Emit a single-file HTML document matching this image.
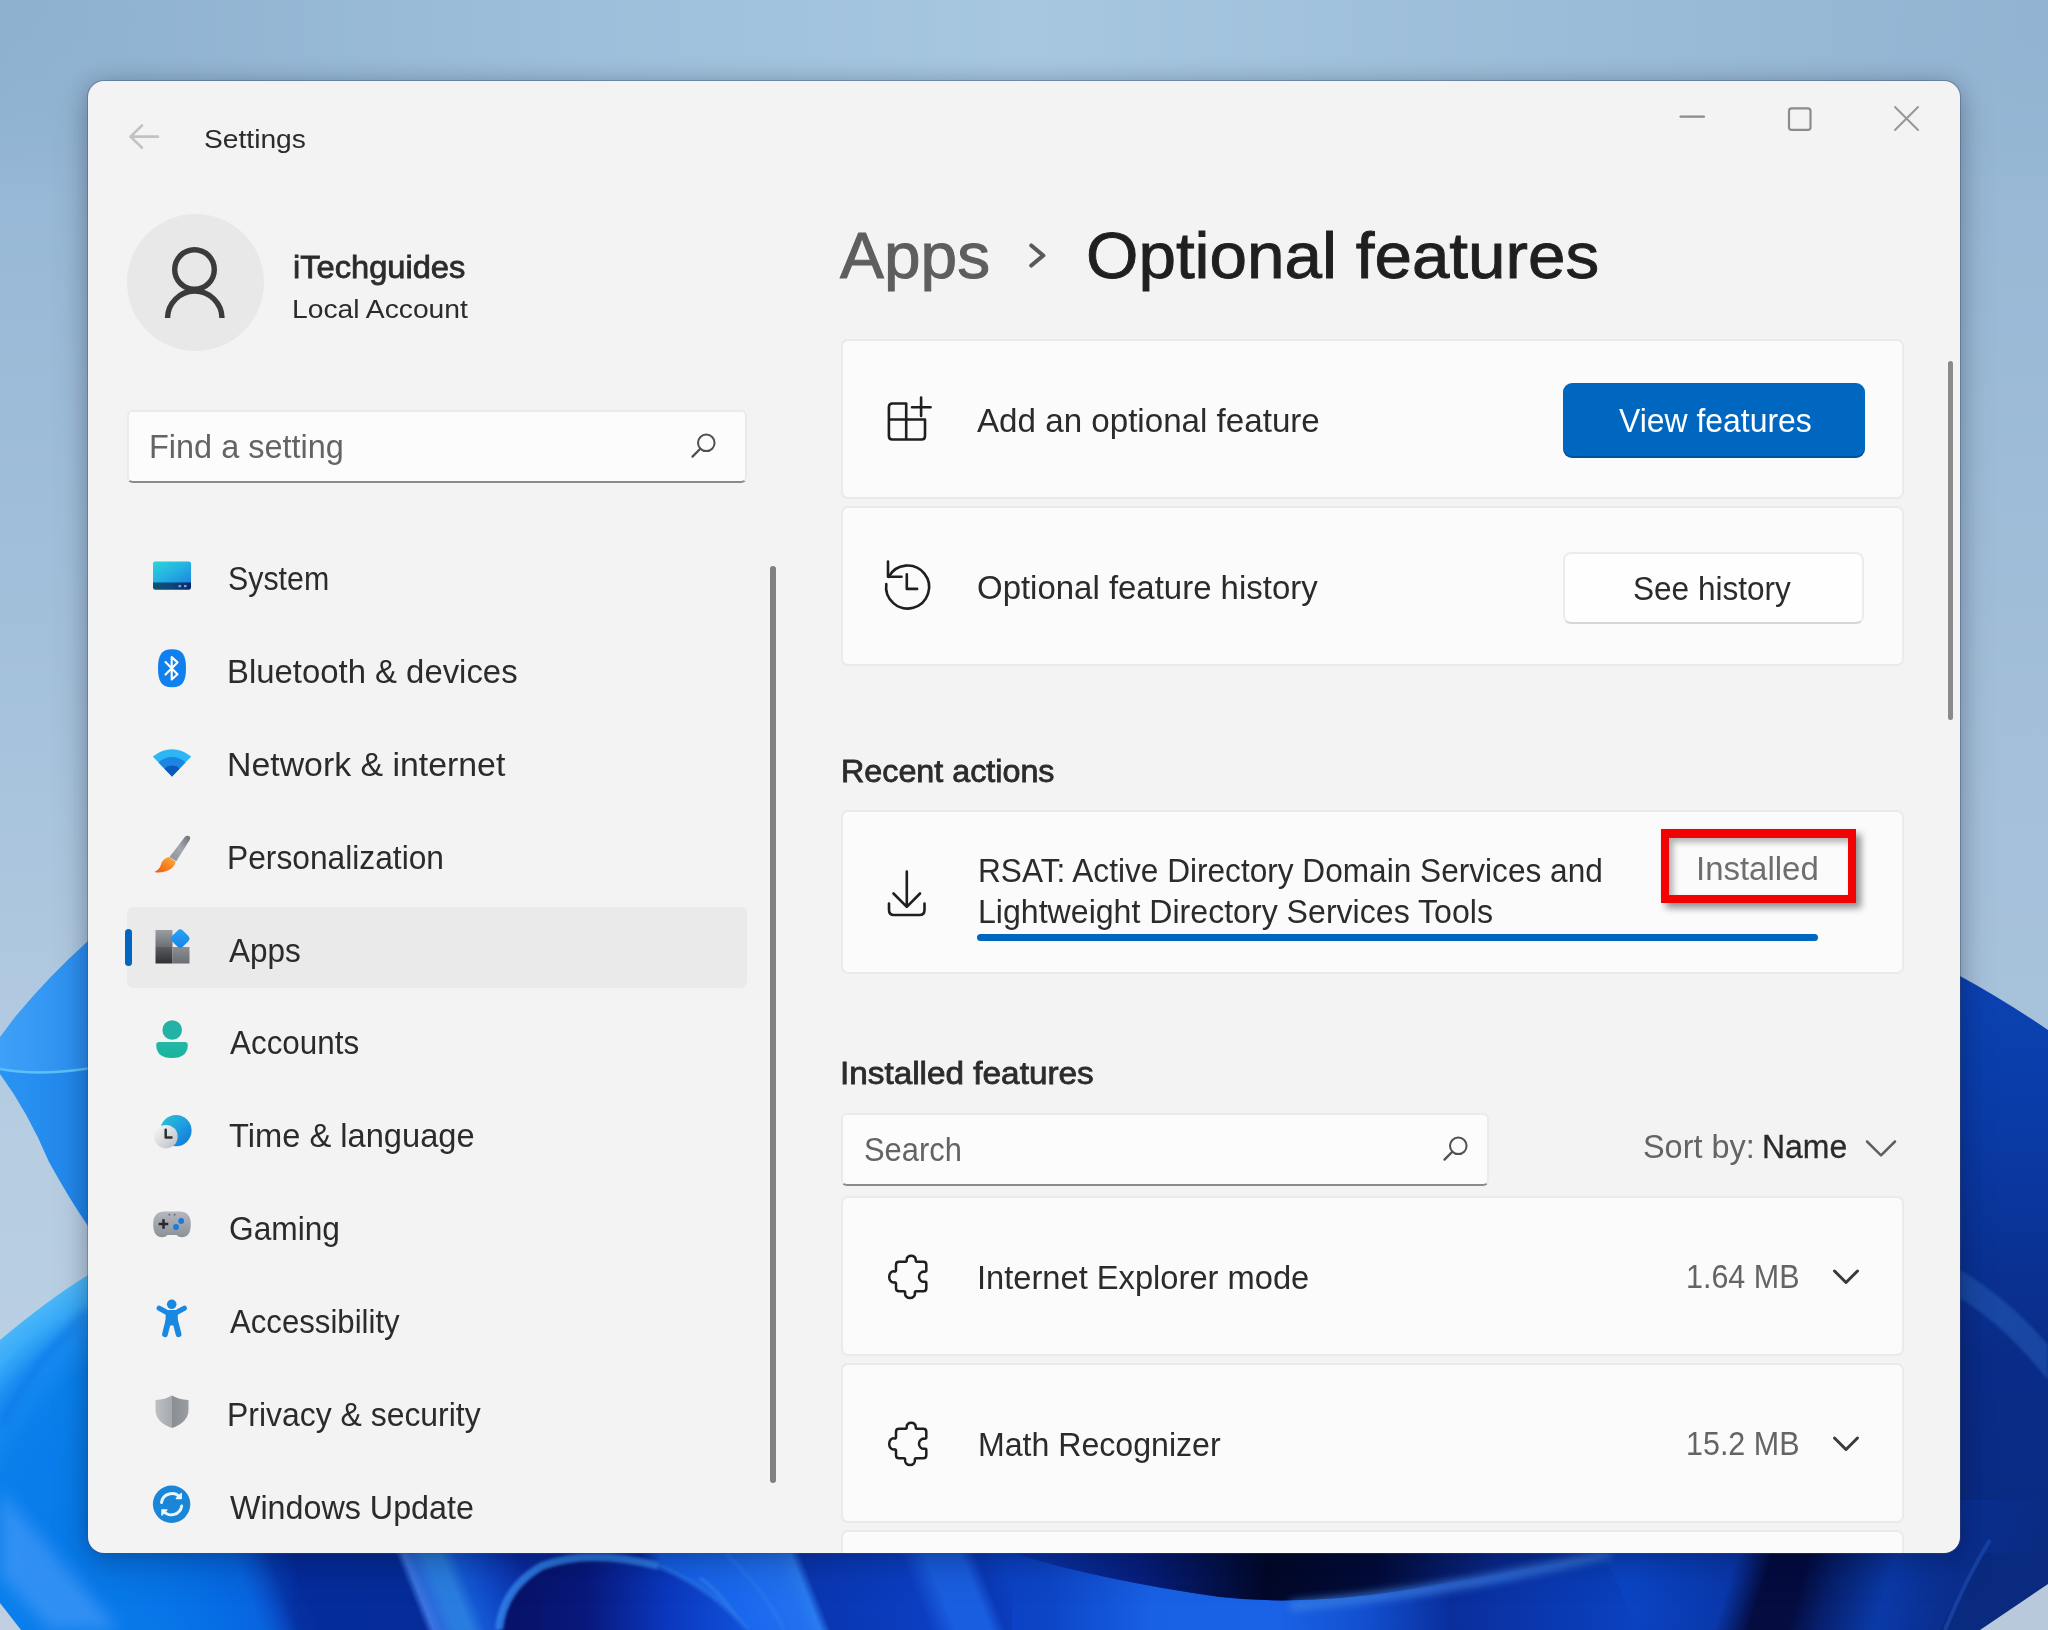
<!DOCTYPE html>
<html lang="en">
<head>
<meta charset="utf-8">
<title>Settings - Optional features</title>
<style>
html,body{margin:0;padding:0;}
body{width:2048px;height:1630px;overflow:hidden;position:relative;background:#a3c0da;font-family:"Liberation Sans",sans-serif;}
#bg{position:absolute;left:0;top:0;width:2048px;height:1630px;display:block;}
#win{position:absolute;left:88px;top:81px;width:1872px;height:1472px;border-radius:16px;background:#f3f3f3;box-shadow:0 0 0 1px rgba(60,80,110,.38),0 2px 21px rgba(0,10,30,.24),0 14px 40px rgba(0,10,30,.16);}
.abs{position:absolute;}
.t{position:absolute;white-space:nowrap;line-height:1;transform-origin:0 50%;display:block;}
.card{position:absolute;left:841px;width:1063px;box-sizing:border-box;background:#fbfbfb;border:2px solid #eaeaea;border-radius:7px;}
.inp{position:absolute;box-sizing:border-box;background:#fcfcfc;border:2px solid #ebebeb;border-bottom:2px solid #8a8a8a;border-radius:6px;}
svg{overflow:visible}
.ic{position:absolute;display:block;}
</style>
</head>
<body>
<svg id="bg" viewBox="0 0 2048 1630" width="2048" height="1630">
<defs>
<linearGradient id="gTop" x1="0" y1="0" x2="1" y2="0">
<stop offset="0" stop-color="#8db0cf"/><stop offset=".28" stop-color="#9dbfdb"/><stop offset=".5" stop-color="#a7c7e0"/><stop offset=".75" stop-color="#9cbdd9"/><stop offset="1" stop-color="#92b4d2"/>
</linearGradient>
<linearGradient id="gLeft" x1="0" y1="0" x2="0" y2="1">
<stop offset="0" stop-color="#8eb2d2" stop-opacity="0"/><stop offset=".12" stop-color="#97b8d6" stop-opacity="1"/><stop offset=".45" stop-color="#a6c2dc"/><stop offset=".7" stop-color="#b6cde2"/><stop offset="1" stop-color="#bfd2e4"/>
</linearGradient>
<linearGradient id="gRight" x1="0" y1="0" x2="0" y2="1">
<stop offset="0" stop-color="#92b4d2" stop-opacity="0"/><stop offset=".12" stop-color="#98b8d5" stop-opacity="1"/><stop offset=".5" stop-color="#a5c0da"/><stop offset="1" stop-color="#adc6dc"/>
</linearGradient>
<linearGradient id="gBotL" gradientUnits="userSpaceOnUse" x1="0" y1="0" x2="2048" y2="0" gradientTransform="translate(-621.2,0) skewX(21.8)"><stop offset="0.0000" stop-color="#2a8cf5"/><stop offset="0.0430" stop-color="#0a7ae8"/><stop offset="0.0732" stop-color="#0870e6"/><stop offset="0.0977" stop-color="#0666e2"/><stop offset="0.1133" stop-color="#0860dc"/><stop offset="0.1221" stop-color="#0a4ac6"/><stop offset="0.1309" stop-color="#0632a4"/><stop offset="0.1416" stop-color="#052c9c"/><stop offset="0.1929" stop-color="#062c9a"/><stop offset="0.1968" stop-color="#3a74e2"/><stop offset="0.2012" stop-color="#2a6cdc"/><stop offset="0.2075" stop-color="#2a7de0"/><stop offset="0.2148" stop-color="#2a7de0"/><stop offset="0.2222" stop-color="#1458d4"/><stop offset="0.2344" stop-color="#0e46c4"/><stop offset="0.2539" stop-color="#0a2aa0"/><stop offset="0.3125" stop-color="#0a2aa6"/><stop offset="0.3223" stop-color="#1560e8"/><stop offset="0.3516" stop-color="#1a68ee"/><stop offset="0.3784" stop-color="#2272f0"/><stop offset="0.3857" stop-color="#2a7af0"/><stop offset="0.3906" stop-color="#0a37b2"/><stop offset="0.4395" stop-color="#0c3ec2"/><stop offset="0.4517" stop-color="#1a5ee0"/><stop offset="0.4688" stop-color="#1a5ee0"/><stop offset="0.4761" stop-color="#0a3ab8"/><stop offset="0.4883" stop-color="#0c42c4"/><stop offset="0.5371" stop-color="#0d48cc"/><stop offset="1.0000" stop-color="#0d48cc"/></linearGradient>
<linearGradient id="gBotR" gradientUnits="userSpaceOnUse" x1="0" y1="0" x2="2048" y2="0" gradientTransform="translate(481.4,0) skewX(-17.3)"><stop offset="0.0000" stop-color="#0d48cc"/><stop offset="0.5371" stop-color="#0d48cc"/><stop offset="0.6104" stop-color="#0a34b0"/><stop offset="0.6836" stop-color="#0a2a94"/><stop offset="0.7227" stop-color="#0a3cb8"/><stop offset="0.8008" stop-color="#0b45c5"/><stop offset="0.8496" stop-color="#0a38ac"/><stop offset="0.8667" stop-color="#040c40"/><stop offset="0.8848" stop-color="#040c40"/><stop offset="0.9009" stop-color="#07206e"/><stop offset="0.9277" stop-color="#0a3aa8"/><stop offset="0.9570" stop-color="#0a2f90"/><stop offset="1.0000" stop-color="#0a2a80"/></linearGradient>
<linearGradient id="gFade" gradientUnits="userSpaceOnUse" x1="100" y1="0" x2="300" y2="0"><stop offset="0" stop-color="#fff"/><stop offset="1" stop-color="#000"/></linearGradient>
<mask id="mFade" maskUnits="userSpaceOnUse" x="0" y="1100" width="320" height="530"><rect x="0" y="1100" width="320" height="530" fill="url(#gFade)"/></mask>
<linearGradient id="gPA" x1="0" y1="0" x2="1" y2="0"><stop offset="0" stop-color="#3ea0f6"/><stop offset="1" stop-color="#1f84ec"/></linearGradient>
<linearGradient id="gPA2" x1="0" y1="0" x2="1" y2="0"><stop offset="0" stop-color="#2a94f2"/><stop offset="1" stop-color="#1a7ce6"/></linearGradient>
<radialGradient id="gPB" gradientUnits="userSpaceOnUse" cx="210" cy="1560" r="330"><stop offset="0" stop-color="#0672e6"/><stop offset=".68" stop-color="#0a80ec"/><stop offset=".8" stop-color="#1a8ef2"/><stop offset=".87" stop-color="#3aacf8"/><stop offset=".93" stop-color="#4cb8f8"/><stop offset="1" stop-color="#4cb8f8"/></radialGradient>
<linearGradient id="gR" x1="0" y1="0" x2="0" y2="1"><stop offset="0" stop-color="#0c44b6"/><stop offset=".25" stop-color="#0a3ca8"/><stop offset=".6" stop-color="#0a2c88"/><stop offset="1" stop-color="#0a2a80"/></linearGradient>
<linearGradient id="gPet" gradientUnits="userSpaceOnUse" x1="520" y1="0" x2="740" y2="0"><stop offset="0" stop-color="#07126a"/><stop offset=".3" stop-color="#08187c"/><stop offset=".65" stop-color="#0a36bc"/><stop offset="1" stop-color="#1050d8"/></linearGradient>
<linearGradient id="gDark" gradientUnits="userSpaceOnUse" x1="1012" y1="0" x2="1620" y2="0"><stop offset="0" stop-color="#0a3ab8"/><stop offset=".22" stop-color="#071e7c"/><stop offset=".42" stop-color="#020828"/><stop offset=".6" stop-color="#030c3a"/><stop offset=".8" stop-color="#0a2a90"/><stop offset="1" stop-color="#0a3cb8"/></linearGradient>
<linearGradient id="gBr" gradientUnits="userSpaceOnUse" x1="1012" y1="0" x2="1640" y2="0"><stop offset="0" stop-color="#0c42c5"/><stop offset=".06" stop-color="#0d46c8"/><stop offset=".22" stop-color="#1860e4"/><stop offset=".42" stop-color="#1a62e6"/><stop offset=".56" stop-color="#1250d0"/><stop offset=".7" stop-color="#0a2e9c"/><stop offset=".85" stop-color="#0a38b0"/><stop offset="1" stop-color="#0b42c0"/></linearGradient>
<filter id="b2" x="-20%" y="-20%" width="140%" height="140%"><feGaussianBlur stdDeviation="1.500"/></filter>
<filter id="b4" x="-20%" y="-20%" width="140%" height="140%"><feGaussianBlur stdDeviation="4"/></filter>
<filter id="b8" x="-20%" y="-20%" width="140%" height="140%"><feGaussianBlur stdDeviation="8"/></filter>
</defs>
<rect width="2048" height="1630" fill="url(#gTop)"/>
<rect x="0" y="0" width="140" height="1630" fill="url(#gLeft)"/>
<rect x="1900" y="0" width="148" height="1630" fill="url(#gRight)"/>
<!-- bottom strip -->
<rect x="0" y="1500" width="1130" height="130" fill="url(#gBotL)"/>
<rect x="1100" y="1500" width="948" height="130" fill="url(#gBotR)"/>
<!-- left petal A -->
<path d="M140 900 L88 941 Q49 976 15 1017 L0 1037 L0 1069 Q37 1075 88 1068 L140 1060 Z" fill="url(#gPA)"/>
<path d="M0 1069 Q37 1075 88 1068 L140 1060 L140 1290 L88 1226 Q70 1200 49 1162 Q28 1112 0 1074 Z" fill="url(#gPA2)"/>
<path d="M0 1069 Q37 1076 88 1068.500" fill="none" stroke="#5cc0fa" stroke-width="2.500"/>
<!-- left petal B -->
<path d="M300 1200 L88 1275 Q49 1299 0 1340 L0 1630 L300 1630 Z" fill="url(#gPB)" mask="url(#mFade)"/>
<path d="M88 1312 Q37 1356 0 1426" fill="none" stroke="#0a60e0" stroke-width="5" opacity=".5" filter="url(#b4)"/>
<path d="M0 1490 L0 1575 L50 1630 L120 1630 Z" fill="#3a94f6" opacity=".8" filter="url(#b8)"/>
<path d="M0 1603 L0 1630 L21 1630 Z" fill="#c0cfdf"/>
<!-- right petal -->
<path d="M1900 940 L1960 976 Q2004 1000 2048 1030 L2048 1630 L1900 1630 Z" fill="url(#gR)"/>
<path d="M1960 1270 Q2010 1300 2048 1345 L2048 1380 Q2005 1326 1960 1298 Z" fill="#2258b4" opacity=".6" filter="url(#b2)"/>
<rect x="1840" y="1500" width="208" height="130" fill="url(#gBotR)"/>
<path d="M1940 1630 L1975 1560 L1985 1553 L2048 1553 L2048 1590 L1985 1630 Z" fill="#0a2a80"/>
<path d="M1945 1630 Q1965 1580 1990 1540" stroke="#1a4ab0" stroke-width="4" fill="none" opacity=".7"/>
<path d="M1980 1630 L2048 1584 L2048 1630 Z" fill="#b9c9dc"/>
<!-- bottom details -->
<path d="M1012 1553 Q1100 1580 1220 1597 Q1300 1606 1400 1591 Q1500 1574 1604 1555 L1640 1630 L1012 1630 Z" fill="url(#gBr)"/>
<path d="M1012 1546 L1700 1546 L1604 1555 Q1500 1574 1400 1591 Q1300 1606 1220 1597 Q1100 1580 1012 1553 Z" fill="url(#gDark)"/>
<path d="M1290 1606 Q1450 1592 1610 1553" fill="none" stroke="#3d80e4" stroke-width="9" opacity=".85" filter="url(#b4)"/>
<path d="M700 1578 Q725 1595 743 1630" fill="none" stroke="#3a84f0" stroke-width="3" opacity=".7" filter="url(#b2)"/>
<path d="M725 1553 Q765 1590 784 1630" fill="none" stroke="#2f7af0" stroke-width="3" opacity=".7" filter="url(#b2)"/>
<path d="M499 1630 Q503 1588 542 1566 Q590 1548 659 1566 Q715 1590 748 1630 Z" fill="url(#gPet)"/>
<path d="M499 1630 Q503 1588 542 1566 Q590 1548 659 1566" fill="none" stroke="#2f7fe8" stroke-width="8" opacity=".9" filter="url(#b2)"/>
<path d="M659 1566 Q715 1590 748 1630" fill="none" stroke="#2a72e6" stroke-width="5" opacity=".7" filter="url(#b2)"/>
</svg>
<div id="win"></div>
<!-- title bar -->
<svg class="ic" style="left:128px;top:122px" width="32" height="30" viewBox="0 0 32 30"><path d="M14 3.500 L2.500 14.600 L14 25.700 M3 14.600 H30" fill="none" stroke="#c2c2c2" stroke-width="2.600" stroke-linecap="round" stroke-linejoin="round"/></svg>
<svg class="ic" style="left:1670px;top:100px" width="260" height="40" viewBox="0 0 260 40">
<path d="M10.500 16.700 H34" stroke="#8c8c8c" stroke-width="2.200" fill="none" stroke-linecap="round"/>
<rect x="119" y="8.300" width="21.500" height="21.500" rx="2.600" fill="none" stroke="#8c8c8c" stroke-width="2.200"/>
<path d="M225 7 L248 30 M248 7 L225 30" stroke="#979797" stroke-width="2" fill="none" stroke-linecap="round"/>
</svg>
<!-- avatar -->
<div class="abs" style="left:127px;top:214px;width:137px;height:137px;border-radius:50%;background:#e8e8e8"></div>
<svg class="ic" style="left:155px;top:241.200px" width="80" height="84" viewBox="0 0 80 84"><circle cx="39.500" cy="28.500" r="19.800" fill="none" stroke="#3b3b3b" stroke-width="5.400"/><path d="M12.500 77 A27.500 27.500 0 0 1 39.500 50 A27.500 27.500 0 0 1 67 77" fill="none" stroke="#3b3b3b" stroke-width="5.400"/></svg>
<!-- search box -->
<div class="inp" style="left:127px;top:410px;width:620px;height:73px"></div>
<svg class="ic" style="left:690px;top:432px" width="28" height="28" viewBox="0 0 28 28"><circle cx="16.300" cy="10.800" r="8.300" fill="none" stroke="#505050" stroke-width="2"/><path d="M10.300 16.800 L2.500 24.600" stroke="#505050" stroke-width="2.300" stroke-linecap="round"/></svg>
<!-- nav selection -->
<div class="abs" style="left:127px;top:907px;width:620px;height:80.500px;border-radius:6px;background:#eaeaea"></div>
<div class="abs" style="left:125.200px;top:928.700px;width:7.200px;height:37px;border-radius:3.500px;background:#0067c0"></div>
<!-- sidebar scrollbar -->
<div class="abs" style="left:770.400px;top:566px;width:5.600px;height:917px;border-radius:3px;background:#808080"></div>
<!-- right scrollbar -->
<div class="abs" style="left:1948px;top:361px;width:5px;height:359px;border-radius:3px;background:#8a8a8a"></div>
<!-- cards -->
<div class="card" style="top:339px;height:160px"></div>
<div class="card" style="top:506px;height:160px"></div>
<div class="card" style="top:810px;height:164px"></div>
<div class="card" style="top:1196px;height:160px"></div>
<div class="card" style="top:1363px;height:160px"></div>
<div class="card" style="top:1530px;height:42px;border-bottom-left-radius:0;border-bottom-right-radius:0;clip-path:inset(0 0 19px 0)"></div>
<!-- buttons -->
<div class="abs" style="left:1563px;top:383px;width:302px;height:75px;border-radius:9px;background:#0067c0;box-shadow:inset 0 -2px 0 rgba(0,0,0,.18)"></div>
<div class="abs" style="left:1563px;top:551.500px;width:301px;height:72.500px;border-radius:8px;background:#fefefe;box-sizing:border-box;border:2px solid #ececec;border-bottom-color:#d6d6d6"></div>
<!-- progress -->
<div class="abs" style="left:977px;top:933.500px;width:841px;height:7px;border-radius:3.500px;background:#0067c0"></div>
<!-- red highlight box -->
<div class="abs" style="left:1660.500px;top:829px;width:195px;height:74px;box-sizing:border-box;border:8.700px solid #f20303;border-top-width:9.800px;box-shadow:5px 5px 7px rgba(0,0,0,.42),inset 4px 4px 6px rgba(0,0,0,.3)"></div>
<!-- installed search -->
<div class="inp" style="left:841px;top:1113px;width:648px;height:73px"></div>
<svg class="ic" style="left:1442px;top:1135px" width="28" height="28" viewBox="0 0 28 28"><circle cx="16.300" cy="10.800" r="8.300" fill="none" stroke="#505050" stroke-width="2"/><path d="M10.300 16.800 L2.500 24.600" stroke="#505050" stroke-width="2.300" stroke-linecap="round"/></svg>
<!-- chevrons -->
<svg class="ic" style="left:1026px;top:240px" width="24" height="32" viewBox="0 0 24 32"><path d="M5.300 5.500 L17.300 15.500 L5.300 25.500" fill="none" stroke="#5a5a5a" stroke-width="4.100" stroke-linecap="round" stroke-linejoin="round"/></svg>
<svg class="ic" style="left:1864px;top:1136px" width="34" height="24" viewBox="0 0 34 24"><path d="M3 5.500 L17 19.300 L31 5.500" fill="none" stroke="#5f5f5f" stroke-width="2.500" stroke-linecap="round" stroke-linejoin="round"/></svg>
<svg class="ic" style="left:1831px;top:1267px" width="30" height="20" viewBox="0 0 30 20"><path d="M3.500 4 L15 15.500 L26.500 4" fill="none" stroke="#3a3a3a" stroke-width="3" stroke-linecap="round" stroke-linejoin="round"/></svg>
<svg class="ic" style="left:1831px;top:1434px" width="30" height="20" viewBox="0 0 30 20"><path d="M3.500 4 L15 15.500 L26.500 4" fill="none" stroke="#3a3a3a" stroke-width="3" stroke-linecap="round" stroke-linejoin="round"/></svg>
<!-- card icons -->
<svg class="ic" style="left:885px;top:395px" width="50" height="50" viewBox="0 0 50 50" fill="none" stroke="#1f1f1f" stroke-width="2.600" stroke-linecap="round" stroke-linejoin="round">
<path d="M21.200 8.500 H7.500 Q3.900 8.500 3.900 12.100 V40.900 Q3.900 44.500 7.500 44.500 H36.400 Q40 44.500 40 40.900 V24.500 H3.900 M21.200 8.500 V44.500"/>
<path d="M27 12.300 H45.600 M36.100 2.600 V21"/>
</svg>
<svg class="ic" style="left:884px;top:561.500px" width="50" height="50" viewBox="0 0 50 50" fill="none" stroke="#1f1f1f" stroke-width="2.600" stroke-linecap="round" stroke-linejoin="round">
<path d="M2.310 22 A21.500 21.500 0 1 0 4.620 14.900"/>
<path d="M4 -0.500 V14.700 H17.500"/>
<path d="M22.800 12.200 V26.900 H33.100"/>
</svg>
<svg class="ic" style="left:885px;top:868px" width="50" height="52" viewBox="0 0 50 52" fill="none" stroke="#1f1f1f" stroke-width="2.600" stroke-linecap="round" stroke-linejoin="round">
<path d="M21.800 3.500 V38.500 M8.500 25.500 L21.800 38.800 L35 25.500"/>
<path d="M4 35.500 V42 Q4 47 9 47 H34.500 Q39.500 47 39.500 42 V35.500"/>
</svg>
<svg class="ic" style="left:885px;top:1252px" width="50" height="50" viewBox="0 0 50 50" fill="none" stroke="#1f1f1f" stroke-width="2.500" stroke-linejoin="round">
<path id="pz" d="M14 9.800 H20.500 C21.500 9.800 21.800 9 21.700 8 C21.500 5.500 23.500 3.800 26.200 3.800 C28.900 3.800 30.900 5.500 30.700 8 C30.600 9 30.900 9.800 31.900 9.800 H38.300 Q41.300 9.800 41.300 12.800 V18.500 C41.300 19.500 40.500 19.900 39.500 19.700 C36.500 19.200 34 21.500 34 24.700 C34 27.900 36.500 30.200 39.500 29.700 C40.500 29.500 41.300 29.900 41.300 30.900 V36.200 Q41.300 39.200 38.300 39.200 H31 C30 39.200 29.700 40 29.900 41 C30.300 43.800 28 46.100 25 46.100 C22 46.100 19.700 43.800 20.100 41 C20.300 40 20 39.200 19 39.200 H14 Q11 39.200 11 36.200 V31.500 C11 30.500 10.200 30.200 9.200 30.400 C6.500 30.900 4.200 28.300 4.200 24.900 C4.200 21.500 6.500 18.900 9.200 19.400 C10.200 19.600 11 19.300 11 18.300 V12.800 Q11 9.800 14 9.800 Z"/>
</svg>
<svg class="ic" style="left:885px;top:1419px" width="50" height="50" viewBox="0 0 50 50" fill="none" stroke="#1f1f1f" stroke-width="2.500" stroke-linejoin="round">
<path d="M14 9.800 H20.500 C21.500 9.800 21.800 9 21.700 8 C21.500 5.500 23.500 3.800 26.200 3.800 C28.900 3.800 30.900 5.500 30.700 8 C30.600 9 30.900 9.800 31.900 9.800 H38.300 Q41.300 9.800 41.300 12.800 V18.500 C41.300 19.500 40.500 19.900 39.500 19.700 C36.500 19.200 34 21.500 34 24.700 C34 27.900 36.500 30.200 39.500 29.700 C40.500 29.500 41.300 29.900 41.300 30.900 V36.200 Q41.300 39.200 38.300 39.200 H31 C30 39.200 29.700 40 29.900 41 C30.300 43.800 28 46.100 25 46.100 C22 46.100 19.700 43.800 20.100 41 C20.300 40 20 39.200 19 39.200 H14 Q11 39.200 11 36.200 V31.500 C11 30.500 10.200 30.200 9.200 30.400 C6.500 30.900 4.200 28.300 4.200 24.900 C4.200 21.500 6.500 18.900 9.200 19.400 C10.200 19.600 11 19.300 11 18.300 V12.800 Q11 9.800 14 9.800 Z"/>
</svg>
<!-- nav icons -->
<svg class="ic" style="left:150px;top:556px" width="44" height="40" viewBox="0 0 44 40">
<defs><linearGradient id="nSys" x1="0" y1="0" x2="1" y2="1"><stop offset="0" stop-color="#2bd6d8"/><stop offset=".5" stop-color="#25b2e2"/><stop offset="1" stop-color="#1a86e0"/></linearGradient>
<linearGradient id="nSys2" x1="0" y1="0" x2="1" y2="0"><stop offset="0" stop-color="#0a5274"/><stop offset=".5" stop-color="#0d4878"/><stop offset="1" stop-color="#0a246a"/></linearGradient></defs>
<path d="M3 7.500 Q3 5.600 5 5.600 H39 Q41 5.600 41 7.500 V27 H3 Z" fill="url(#nSys)"/>
<path d="M3 26.500 H41 V31.500 Q41 33.700 38.500 33.700 H5.500 Q3 33.700 3 31.500 Z" fill="url(#nSys2)"/>
<rect x="28.500" y="29" width="2.600" height="2.200" fill="#6fa4d6"/><rect x="34" y="29" width="2.600" height="2.200" fill="#7b9fdc"/>
</svg>
<svg class="ic" style="left:150px;top:646px" width="44" height="46" viewBox="0 0 44 46">
<path d="M22 3.300 C32.500 3.300 36 9 36 22.300 C36 35.600 32.500 41.300 22 41.300 C11.500 41.300 8 35.600 8 22.300 C8 9 11.500 3.300 22 3.300 Z" fill="#0f80ee"/>
<path d="M15.500 16 L27.500 28.200 L21.700 33.500 V11.100 L27.500 16.400 L15.500 28.600" fill="none" stroke="#fff" stroke-width="2.100" stroke-linejoin="round" stroke-linecap="round"/>
</svg>
<svg class="ic" style="left:150px;top:744px" width="44" height="38" viewBox="0 0 44 38">
<defs><clipPath id="wfc"><path d="M22 32.500 L2.800 12.600 Q12 5.300 22 5.300 Q32 5.300 41.200 12.600 Z"/></clipPath></defs>
<g clip-path="url(#wfc)"><rect x="0" y="0" width="44" height="38" fill="#2cb6f5"/><circle cx="22" cy="32.300" r="19.300" fill="#1a86e2"/><circle cx="22" cy="32.300" r="10.800" fill="#0b57bc"/></g>
</svg>
<svg class="ic" style="left:150px;top:832px" width="44" height="46" viewBox="0 0 44 46">
<defs><linearGradient id="nBr" x1="1" y1="0" x2="0" y2="1"><stop offset="0" stop-color="#6c7077"/><stop offset=".5" stop-color="#a4a8ae"/><stop offset="1" stop-color="#8d9198"/></linearGradient>
<linearGradient id="nBr2" x1="1" y1="0" x2="0" y2="1"><stop offset="0" stop-color="#fbb040"/><stop offset=".6" stop-color="#f77a1c"/><stop offset="1" stop-color="#f05a18"/></linearGradient></defs>
<path d="M38.800 4 Q41 5.200 39.800 7.700 L26.300 29.300 L19.500 25 L35 4.800 Q36.800 3 38.800 4 Z" fill="url(#nBr)"/>
<path d="M19 25 L25.800 29.800 Q24.500 35.500 18 38.500 Q11 41.500 4.500 40 Q9.500 37.500 11 32.500 Q12.500 26.500 19 25 Z" fill="url(#nBr2)"/>
</svg>
<svg class="ic" style="left:150px;top:924px" width="44" height="44" viewBox="0 0 44 44">
<defs><linearGradient id="nAp1" x1="0" y1="0" x2="0" y2="1"><stop offset="0" stop-color="#9a9da2"/><stop offset="1" stop-color="#6c6f74"/></linearGradient>
<linearGradient id="nAp2" x1="0" y1="0" x2="0" y2="1"><stop offset="0" stop-color="#5a5d61"/><stop offset="1" stop-color="#2f3134"/></linearGradient>
<linearGradient id="nAp3" x1="0" y1="0" x2="0" y2="1"><stop offset="0" stop-color="#8c8f94"/><stop offset="1" stop-color="#6a6d72"/></linearGradient></defs>
<rect x="5.500" y="6" width="17" height="17" fill="url(#nAp1)"/>
<rect x="5.500" y="23" width="17" height="16.500" fill="url(#nAp2)"/>
<rect x="22.500" y="23" width="17" height="16.500" fill="url(#nAp3)"/>
<defs><linearGradient id="nAp4" x1="0" y1="0" x2="1" y2="1"><stop offset="0" stop-color="#28a6f4"/><stop offset="1" stop-color="#1780e6"/></linearGradient></defs><rect x="22.600" y="7.100" width="15.200" height="15.200" rx="4" transform="rotate(45 30.200 14.700)" fill="url(#nAp4)"/>
</svg>
<svg class="ic" style="left:150px;top:1016px" width="44" height="46" viewBox="0 0 44 46">
<defs><linearGradient id="nAc" x1="0" y1="0" x2="0" y2="1"><stop offset="0" stop-color="#25b7a6"/><stop offset="1" stop-color="#17b49a"/></linearGradient></defs>
<circle cx="22.200" cy="14" r="9.800" fill="#23b2a3"/>
<path d="M8.500 26 H35.500 Q37.800 26 37.800 28.500 Q37.800 42 22 42 Q6.200 42 6.200 28.500 Q6.200 26 8.500 26 Z" fill="url(#nAc)"/>
</svg>
<svg class="ic" style="left:150px;top:1110px" width="44" height="46" viewBox="0 0 44 46">
<defs><linearGradient id="nGl" x1="0" y1="0" x2="1" y2="1"><stop offset="0" stop-color="#2cc5d0"/><stop offset=".5" stop-color="#1ea0e0"/><stop offset="1" stop-color="#1272d8"/></linearGradient>
<linearGradient id="nCk" x1="0" y1="0" x2="1" y2="1"><stop offset="0" stop-color="#fafafa"/><stop offset="1" stop-color="#b8bcc2"/></linearGradient></defs>
<circle cx="26" cy="20.600" r="15.600" fill="url(#nGl)"/>
<circle cx="15.900" cy="26.700" r="11.800" fill="url(#nCk)"/>
<path d="M15.700 19.800 V27.600 H21.500" fill="none" stroke="#2e3034" stroke-width="2.500" stroke-linecap="round" stroke-linejoin="round"/>
</svg>
<svg class="ic" style="left:150px;top:1204px" width="44" height="40" viewBox="0 0 44 40">
<defs><linearGradient id="nGm" x1="0" y1="0" x2="0" y2="1"><stop offset="0" stop-color="#b4b8be"/><stop offset="1" stop-color="#8c9198"/></linearGradient></defs>
<path d="M14.500 7.500 H29.500 Q40.800 7.500 40.800 20 Q40.800 33.200 32 33.200 Q28.500 33.200 26.500 31 H17.500 Q15.500 33.200 12 33.200 Q3.200 33.200 3.200 20 Q3.200 7.500 14.500 7.500 Z" fill="url(#nGm)"/>
<path d="M8.700 20 H18.300 M13.500 15.200 V24.800" stroke="#26282b" stroke-width="2.500" fill="none"/>
<circle cx="31.200" cy="17" r="2.900" fill="#1a7ae0"/><circle cx="26" cy="23" r="2.900" fill="#1a7ae0"/>
<circle cx="19.400" cy="10.700" r="1" fill="#6a6e74"/><circle cx="24.600" cy="10.700" r="1" fill="#6a6e74"/>
</svg>
<svg class="ic" style="left:150px;top:1296px" width="44" height="46" viewBox="0 0 44 46">
<circle cx="21.700" cy="8.300" r="4.800" fill="#1a88e0"/>
<path d="M9.200 12.200 L17 16.500 H26.500 L34.300 12.200" fill="none" stroke="#1a88e0" stroke-width="5.200" stroke-linecap="round" stroke-linejoin="round"/>
<path d="M15.600 15 H27.800 V27 L24.500 29.500 H19 L15.600 27 Z" fill="#1a88e0"/>
<path d="M18.300 25 L15 38.300 M25.200 25 L28.600 38.300" fill="none" stroke="#1a88e0" stroke-width="5.800" stroke-linecap="round"/>
</svg>
<svg class="ic" style="left:150px;top:1390px" width="44" height="44" viewBox="0 0 44 44">
<defs><linearGradient id="nSh" x1="0" y1="0" x2="1" y2="0"><stop offset="0" stop-color="#bcbfc4"/><stop offset=".5" stop-color="#a6a9ae"/><stop offset=".5" stop-color="#8a8d92"/><stop offset="1" stop-color="#9a9da2"/></linearGradient></defs>
<path d="M22 5.500 Q29 9.500 38 10 Q38.500 10 38.500 11 V20 Q38.500 32 22 38 Q5.500 32 5.500 20 V11 Q5.500 10 6 10 Q15 9.500 22 5.500 Z" fill="url(#nSh)"/>
</svg>
<svg class="ic" style="left:150px;top:1482px" width="44" height="44" viewBox="0 0 44 44">
<circle cx="21.600" cy="22.200" r="18.700" fill="#1a86d8"/>
<path d="M11.500 20.500 A10.500 10.500 0 0 1 30 15.500 M31.700 23.900 A10.500 10.500 0 0 1 13.200 28.900" fill="none" stroke="#eaf4fc" stroke-width="2.900" stroke-linecap="round"/>
<path d="M31.300 11.500 V16.500 H26.300 Z M11.900 33 V28 H16.900 Z" fill="#eaf4fc" stroke="#eaf4fc" stroke-width="1.300" stroke-linejoin="round"/>
</svg>
<!-- text -->
<span class="t" style="left:203.92px;top:126.53px;font-size:25.6px;color:#2b2b2b;transform:scaleX(1.1013);">Settings</span>
<span class="t" style="left:292.63px;top:252.00px;font-size:31.3px;color:#2b2b2b;transform:scaleX(1.0425);-webkit-text-stroke:0.8px #2b2b2b;">iTechguides</span>
<span class="t" style="left:291.93px;top:295.99px;font-size:26.0px;color:#2b2b2b;transform:scaleX(1.0865);">Local Account</span>
<span class="t" style="left:149.42px;top:430.86px;font-size:32.3px;color:#646464;transform:scaleX(1.0051);">Find a setting</span>
<span class="t" style="left:227.55px;top:563.46px;font-size:32.3px;color:#2b2b2b;transform:scaleX(0.9399);">System</span>
<span class="t" style="left:226.67px;top:655.86px;font-size:32.3px;color:#2b2b2b;transform:scaleX(1.0179);">Bluetooth &amp; devices</span>
<span class="t" style="left:227.10px;top:749.46px;font-size:32.3px;color:#2b2b2b;transform:scaleX(1.0475);">Network &amp; internet</span>
<span class="t" style="left:227.03px;top:841.86px;font-size:32.3px;color:#2b2b2b;transform:scaleX(0.9826);">Personalization</span>
<span class="t" style="left:228.85px;top:934.66px;font-size:32.3px;color:#2b2b2b;transform:scaleX(0.9759);">Apps</span>
<span class="t" style="left:229.84px;top:1027.36px;font-size:32.3px;color:#2b2b2b;transform:scaleX(0.9728);">Accounts</span>
<span class="t" style="left:228.71px;top:1120.16px;font-size:32.3px;color:#2b2b2b;transform:scaleX(1.0112);">Time &amp; language</span>
<span class="t" style="left:228.67px;top:1212.96px;font-size:32.3px;color:#2b2b2b;transform:scaleX(0.9813);">Gaming</span>
<span class="t" style="left:229.84px;top:1306.36px;font-size:32.3px;color:#2b2b2b;transform:scaleX(0.9644);">Accessibility</span>
<span class="t" style="left:227.02px;top:1399.16px;font-size:32.3px;color:#2b2b2b;transform:scaleX(0.9884);">Privacy &amp; security</span>
<span class="t" style="left:229.75px;top:1492.16px;font-size:32.3px;color:#2b2b2b;transform:scaleX(0.9990);">Windows Update</span>
<span class="t" style="left:839.51px;top:223.80px;font-size:64.5px;color:#5e5e5e;transform:scaleX(1.0208);-webkit-text-stroke:1.0px #5e5e5e;">Apps</span>
<span class="t" style="left:1086.42px;top:223.65px;font-size:64.5px;color:#1f1f1f;transform:scaleX(1.0447);-webkit-text-stroke:0.9px #1f1f1f;">Optional features</span>
<span class="t" style="left:977.42px;top:405.16px;font-size:32.3px;color:#2b2b2b;transform:scaleX(1.0264);">Add an optional feature</span>
<span class="t" style="left:1618.83px;top:405.26px;font-size:32.3px;color:#ffffff;transform:scaleX(0.9883);">View features</span>
<span class="t" style="left:976.76px;top:572.26px;font-size:32.3px;color:#2b2b2b;transform:scaleX(1.0202);">Optional feature history</span>
<span class="t" style="left:1633.14px;top:572.76px;font-size:32.3px;color:#2b2b2b;transform:scaleX(0.9771);">See history</span>
<span class="t" style="left:840.83px;top:756.40px;font-size:31.3px;color:#2b2b2b;transform:scaleX(1.0312);-webkit-text-stroke:0.8px #2b2b2b;">Recent actions</span>
<span class="t" style="left:977.50px;top:854.66px;font-size:32.3px;color:#2b2b2b;transform:scaleX(0.9787);">RSAT: Active Directory Domain Services and</span>
<span class="t" style="left:977.50px;top:896.06px;font-size:32.3px;color:#2b2b2b;transform:scaleX(0.9938);">Lightweight Directory Services Tools</span>
<span class="t" style="left:1695.78px;top:853.46px;font-size:32.3px;color:#6e6e6e;transform:scaleX(1.0205);">Installed</span>
<span class="t" style="left:839.72px;top:1057.90px;font-size:31.3px;color:#2b2b2b;transform:scaleX(1.0644);-webkit-text-stroke:0.8px #2b2b2b;">Installed features</span>
<span class="t" style="left:864.13px;top:1134.26px;font-size:32.3px;color:#646464;transform:scaleX(0.9564);">Search</span>
<span class="t" style="left:1642.93px;top:1131.06px;font-size:32.3px;color:#646464;transform:scaleX(1.0037);">Sort by:</span>
<span class="t" style="left:1762.15px;top:1130.91px;font-size:32.3px;color:#2b2b2b;transform:scaleX(0.9892);-webkit-text-stroke:0.3px #2b2b2b;">Name</span>
<span class="t" style="left:977.33px;top:1261.66px;font-size:32.3px;color:#2b2b2b;transform:scaleX(1.0113);">Internet Explorer mode</span>
<span class="t" style="left:1685.89px;top:1261.26px;font-size:32.3px;color:#646464;transform:scaleX(0.9434);">1.64 MB</span>
<span class="t" style="left:977.63px;top:1428.66px;font-size:32.3px;color:#2b2b2b;transform:scaleX(0.9938);">Math Recognizer</span>
<span class="t" style="left:1685.89px;top:1428.26px;font-size:32.3px;color:#646464;transform:scaleX(0.9434);">15.2 MB</span>
</body>
</html>
